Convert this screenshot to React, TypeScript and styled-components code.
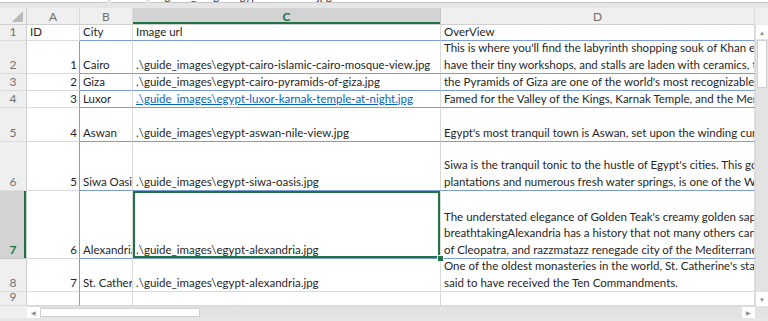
import React from 'react';
import styled, { createGlobalStyle } from 'styled-components';

const GREEN = '#217346';
const BLUE = '#7a9cd9';
const GRID = '#dadada';

const GlobalStyle = createGlobalStyle`
    html, body {
        margin: 0;
        padding: 0;
        background: #e6e6e6;
    }
    body {
        font-family: Lato, "Open Sans", sans-serif;
    }
`;

const Page = styled.div`
    width: 768px;
    height: 321px;
    display: flex;
    flex-direction: column;
    overflow: hidden;
    background: #e6e6e6;
`;

const FormulaStrip = styled.div`
    height: 8px;
    display: flex;
    gap: 4px;
    align-items: flex-start;
`;

const FormulaBox = styled.div<{ $width?: number }>`
    ${(p) => (p.$width ? `width: ${p.$width}px;` : 'flex: 1;')}
    height: 2px;
    background: #ffffff;
    border-bottom: 1px solid #c6c6c6;
    overflow: hidden;
    display: flex;
    align-items: flex-end;
    padding-left: 7px;
`;

const FormulaText = styled.span`
    font-size: 11px;
    line-height: 12px;
    color: #333333;
    white-space: nowrap;
`;

const Sheet = styled.div<{ $rows: string }>`
    display: grid;
    grid-template-columns: 27px 53px 53px 308px 314px 13px;
    grid-template-rows: ${(p) => p.$rows};
    background: #ffffff;
    font-size: 11.5px;
    color: #262626;
`;

const Corner = styled.div`
    background: #efefef;
    border-right: 1px solid #cfcfcf;
    border-bottom: 1px solid #cfcfcf;
    display: flex;
    align-items: flex-end;
    justify-content: flex-end;
    padding: 0 3px 2px 0;
`;

const ColHeader = styled.div<{ $selected?: boolean }>`
    background: ${(p) => (p.$selected ? '#d3d3d3' : '#efefef')};
    border-right: 1px solid ${(p) => (p.$selected ? '#c4c4c4' : '#dcdcdc')};
    border-bottom: 1px solid #cfcfcf;
    box-shadow: ${(p) => (p.$selected ? `inset 0 -2px 0 ${GREEN}` : 'none')};
    color: ${(p) => (p.$selected ? GREEN : '#6f6f6f')};
    font-weight: ${(p) => (p.$selected ? 700 : 400)};
    display: flex;
    align-items: center;
    justify-content: center;
    font-size: 12px;
`;

const RowHeader = styled.div<{ $selected?: boolean }>`
    background: ${(p) => (p.$selected ? '#d3d3d3' : '#efefef')};
    border-right: 1px solid #cfcfcf;
    border-bottom: 1px solid ${(p) => (p.$selected ? '#c4c4c4' : '#dcdcdc')};
    box-shadow: ${(p) => (p.$selected ? `inset -2px 0 0 ${GREEN}` : 'none')};
    color: ${(p) => (p.$selected ? GREEN : '#6f6f6f')};
    font-weight: ${(p) => (p.$selected ? 700 : 400)};
    display: flex;
    align-items: flex-end;
    justify-content: center;
    line-height: 16px;
    font-size: 12px;
    overflow: hidden;
`;

const Cell = styled.div<{
    $blueBottom?: boolean;
    $blueRight?: boolean;
    $active?: boolean;
}>`
    position: relative;
    border-right: 1px solid ${(p) => (p.$blueRight ? BLUE : GRID)};
    border-bottom: 1px solid ${(p) => (p.$blueBottom ? BLUE : GRID)};
    box-shadow: ${(p) => (p.$active ? `inset 0 0 0 2px ${GREEN}` : 'none')};
    min-width: 0;
    z-index: ${(p) => (p.$active ? 1 : 'auto')};
`;

const CellText = styled.div<{ $right?: boolean }>`
    height: 100%;
    display: flex;
    flex-direction: column;
    justify-content: flex-end;
    align-items: ${(p) => (p.$right ? 'flex-end' : 'flex-start')};
    padding: 0 ${(p) => (p.$right ? '2px' : '3px')} 0 ${(p) => (p.$right ? '0' : '3px')};
    overflow: hidden;
    white-space: nowrap;
    line-height: 16.5px;
`;

const Line = styled.span`
    display: block;
`;

const Link = styled.span`
    color: #0563c1;
    text-decoration: underline;
`;

const FillHandle = styled.span`
    position: absolute;
    right: -4px;
    bottom: -4px;
    width: 5px;
    height: 5px;
    background: ${GREEN};
    border: 1px solid #ffffff;
    z-index: 2;
`;

const VScroll = styled.div<{ $span: number }>`
    grid-column: 6;
    grid-row: 2 / span ${(p) => p.$span};
    background: #e3e3e3;
    border-left: 1px solid #dcdcdc;
    display: flex;
    flex-direction: column;
`;

const ScrollButton = styled.div<{ $size?: number }>`
    flex: 0 0 ${(p) => p.$size ?? 13}px;
    background: #ffffff;
    display: flex;
    align-items: center;
    justify-content: center;
    color: #8a8a8a;
    font-size: 6px;
`;

const VThumb = styled.div`
    flex: 0 0 46px;
    margin: 1px 1px 0;
    background: #ffffff;
    border: 1px solid #d2d2d2;
`;

const Filler = styled.div`
    flex: 1;
`;

const Blank = styled.div<{ $bg?: string }>`
    background: ${(p) => p.$bg ?? '#efefef'};
`;

const HScroll = styled.div`
    grid-column: 2 / span 4;
    background: #e3e3e3;
    display: flex;
    border-top: 1px solid #dcdcdc;
`;

const HThumb = styled.div`
    flex: 0 0 158px;
    background: #ffffff;
    border: 1px solid #d2d2d2;
    margin: 1px 0;
`;

const Triangle = () => (
    <svg width="11" height="11" viewBox="0 0 11 11">
        <polygon points="11,0 11,11 0,11" fill="#b9b9b9" />
    </svg>
);

type Row = {
    height: number;
    a?: string;
    b?: string;
    c?: string;
    d?: string[];
    link?: boolean;
};

const rows: Row[] = [
    { height: 16, a: 'ID', b: 'City', c: 'Image url', d: ['OverView'] },
    {
        height: 33,
        a: '1',
        b: 'Cairo',
        c: '.\\guide_images\\egypt-cairo-islamic-cairo-mosque-view.jpg',
        d: [
            "This is where you'll find the labyrinth shopping souk of Khan el-Khalili, where craftsmen",
            'have their tiny workshops, and stalls are laden with ceramics, textiles and spices',
        ],
    },
    {
        height: 17,
        a: '2',
        b: 'Giza',
        c: '.\\guide_images\\egypt-cairo-pyramids-of-giza.jpg',
        d: ["the Pyramids of Giza are one of the world's most recognizable landmarks"],
    },
    {
        height: 17,
        a: '3',
        b: 'Luxor',
        c: '.\\guide_images\\egypt-luxor-karnak-temple-at-night.jpg',
        link: true,
        d: ['Famed for the Valley of the Kings, Karnak Temple, and the Memnon Colossi'],
    },
    {
        height: 34,
        a: '4',
        b: 'Aswan',
        c: '.\\guide_images\\egypt-aswan-nile-view.jpg',
        d: ["Egypt's most tranquil town is Aswan, set upon the winding curves of the Nile"],
    },
    {
        height: 49,
        a: '5',
        b: 'Siwa Oasis',
        c: '.\\guide_images\\egypt-siwa-oasis.jpg',
        d: [
            "Siwa is the tranquil tonic to the hustle of Egypt's cities. This gorgeous oasis, with its date",
            'plantations and numerous fresh water springs, is one of the Western Desert highlights',
        ],
    },
    {
        height: 68,
        a: '6',
        b: 'Alexandria',
        c: '.\\guide_images\\egypt-alexandria.jpg',
        d: [
            "The understated elegance of Golden Teak's creamy golden sapwood is",
            'breathtakingAlexandria has a history that not many others can match',
            'of Cleopatra, and razzmatazz renegade city of the Mediterranean',
        ],
    },
    {
        height: 33,
        a: '7',
        b: "St. Catherine's",
        c: '.\\guide_images\\egypt-alexandria.jpg',
        d: [
            "One of the oldest monasteries in the world, St. Catherine's stands where Moses is",
            'said to have received the Ten Commandments.',
        ],
    },
    { height: 14 },
];

const ACTIVE_ROW = 6;

function App(): JSX.Element {
    const template = `17px ${rows.map((r) => `${r.height}px`).join(' ')} 12px`;

    return (
        <>
            <GlobalStyle />
            <Page>
                <FormulaStrip>
                    <FormulaBox $width={100} />
                    <FormulaBox $width={28} />
                    <FormulaBox>
                        <FormulaText>.\guide_images\egypt-alexandria.jpg</FormulaText>
                    </FormulaBox>
                </FormulaStrip>
                <Sheet $rows={template}>
                    <Corner>
                        <Triangle />
                    </Corner>
                    <ColHeader>A</ColHeader>
                    <ColHeader>B</ColHeader>
                    <ColHeader $selected>C</ColHeader>
                    <ColHeader>D</ColHeader>
                    <Blank />

                    {rows.map((row, i) => {
                        const inTable = i <= 6;
                        const active = i === ACTIVE_ROW;
                        return (
                            <React.Fragment key={i}>
                                <RowHeader $selected={active}>{i + 1}</RowHeader>
                                <Cell $blueRight={i >= 1}>
                                    <CellText $right={i > 0}>{row.a}</CellText>
                                </Cell>
                                <Cell $blueBottom={inTable}>
                                    <CellText>{row.b}</CellText>
                                </Cell>
                                <Cell $blueBottom={inTable} $active={active}>
                                    <CellText>{row.link ? <Link>{row.c}</Link> : row.c}</CellText>
                                    {active && <FillHandle />}
                                </Cell>
                                <Cell $blueBottom={inTable}>
                                    <CellText>
                                        {row.d?.map((line) => (
                                            <Line key={line}>{line}</Line>
                                        ))}
                                    </CellText>
                                </Cell>
                                {i === 0 && (
                                    <VScroll $span={rows.length}>
                                        <ScrollButton $size={14}>▲</ScrollButton>
                                        <VThumb />
                                        <Filler />
                                        <ScrollButton $size={14}>▼</ScrollButton>
                                    </VScroll>
                                )}
                            </React.Fragment>
                        );
                    })}

                    <Blank $bg="#efefef" />
                    <HScroll>
                        <ScrollButton>◀</ScrollButton>
                        <HThumb />
                        <Filler />
                        <ScrollButton>▶</ScrollButton>
                    </HScroll>
                    <Blank $bg="#e3e3e3" />
                </Sheet>
            </Page>
        </>
    );
}

export default App;
